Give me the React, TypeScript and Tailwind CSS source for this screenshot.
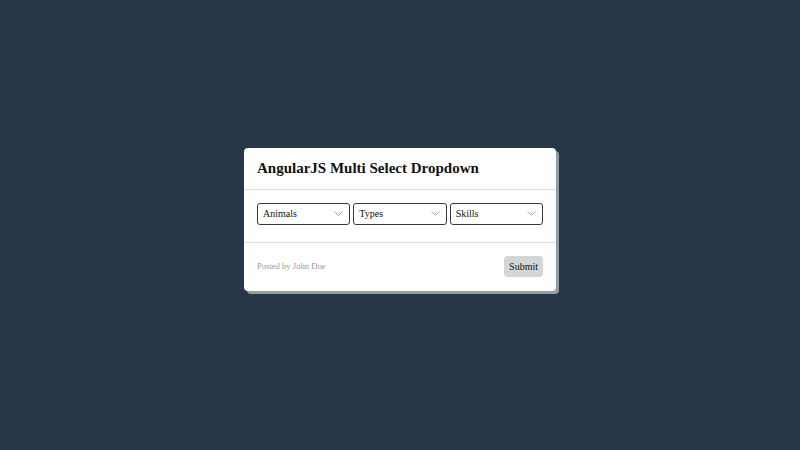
import React from 'react';

const Chevron: React.FC = () => (
  <svg width="9" height="5" viewBox="0 0 9 5" fill="none" stroke="#a3a8ad" strokeWidth="1">
    <path d="M0.5 0.5 L4.5 4.5 L8.5 0.5" />
  </svg>
);

const Select: React.FC<{ label: string }> = ({ label }) => (
  <div className="flex-1 h-[22px] flex items-center justify-between pl-[5px] pr-[6px] border border-[#3a3a3a] rounded-[3px] bg-white text-[10px] text-[#111]">
    <span>{label}</span>
    <Chevron />
  </div>
);

export default function App() {
  return (
    <div
      className="w-full h-[450px] bg-[#283748] flex items-center justify-center"
      style={{ fontFamily: '"Liberation Serif", serif' }}
    >
      <div className="w-[312px] bg-white rounded-[4px] shadow-[3px_3px_0_#8e9ea4] -mt-[12px]">
        <div className="h-[42px] px-[13px] flex items-center border-b border-[#dcdcdc]">
          <h1 className="text-[15px] font-bold text-[#111]">AngularJS Multi Select Dropdown</h1>
        </div>
        <div className="px-[13px] pt-[13px] pb-[17px] flex gap-[3px] border-b border-[#dcdcdc]">
          <Select label="Animals" />
          <Select label="Types" />
          <Select label="Skills" />
        </div>
        <div className="h-[48px] px-[13px] flex items-center justify-between">
          <span className="text-[8.6px] text-[#999]">Posted by John Doe</span>
          <button className="h-[21px] px-[5px] rounded-[4px] bg-[#d3d6d4] text-[10px] text-[#111]">Submit</button>
        </div>
      </div>
    </div>
  );
}
